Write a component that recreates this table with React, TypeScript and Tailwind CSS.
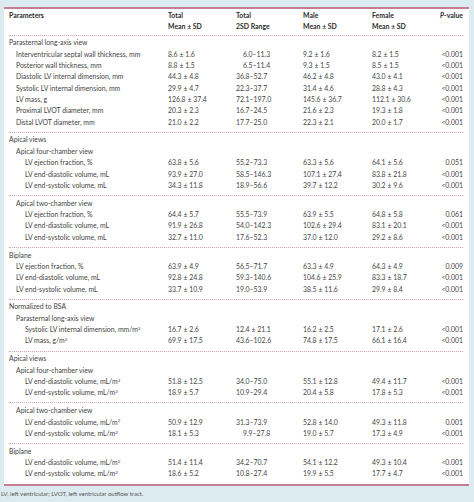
import React from 'react';

type Row = {
  label: React.ReactNode;
  level: number;
  vals?: string[];
  shift?: boolean;
};

const sup = (base: string) => (
  <>
    {base}
    <sup className="text-[4.5px]">2</sup>
  </>
);

const sections: Row[][] = [
  [
    { label: 'Parasternal long-axis view', level: 0 },
    { label: 'Interventricular septal wall thickness, mm', level: 1, vals: ['8.6 ± 1.6', '6.0–11.3', '9.2 ± 1.6', '8.2 ± 1.5', '<0.001'], shift: true },
    { label: 'Posterior wall thickness, mm', level: 1, vals: ['8.8 ± 1.5', '6.5–11.4', '9.3 ± 1.5', '8.5 ± 1.5', '<0.001'], shift: true },
    { label: 'Diastolic LV internal dimension, mm', level: 1, vals: ['44.3 ± 4.8', '36.8–52.7', '46.2 ± 4.8', '43.0 ± 4.1', '<0.001'] },
    { label: 'Systolic LV internal dimension, mm', level: 1, vals: ['29.9 ± 4.7', '22.3–37.7', '31.4 ± 4.6', '28.8 ± 4.3', '<0.001'] },
    { label: 'LV mass, g', level: 1, vals: ['126.8 ± 37.4', '72.1–197.0', '145.6 ± 36.7', '112.1 ± 30.6', '<0.001'] },
    { label: 'Proximal LVOT diameter, mm', level: 1, vals: ['20.3 ± 2.3', '16.7–24.5', '21.6 ± 2.3', '19.3 ± 1.8', '<0.001'] },
    { label: 'Distal LVOT diameter, mm', level: 1, vals: ['21.0 ± 2.2', '17.7–25.0', '22.3 ± 2.1', '20.0 ± 1.7', '<0.001'] },
  ],
  [
    { label: 'Apical views', level: 0 },
    { label: 'Apical four-chamber view', level: 1 },
    { label: 'LV ejection fraction, %', level: 2, vals: ['63.8 ± 5.6', '55.2–73.3', '63.3 ± 5.6', '64.1 ± 5.6', '0.051'] },
    { label: 'LV end-diastolic volume, mL', level: 2, vals: ['93.9 ± 27.0', '58.5–146.3', '107.1 ± 27.4', '83.8 ± 21.8', '<0.001'] },
    { label: 'LV end-systolic volume, mL', level: 2, vals: ['34.3 ± 11.8', '18.9–56.6', '39.7 ± 12.2', '30.2 ± 9.6', '<0.001'] },
  ],
  [
    { label: 'Apical two-chamber view', level: 1 },
    { label: 'LV ejection fraction, %', level: 2, vals: ['64.4 ± 5.7', '55.5–73.9', '63.9 ± 5.5', '64.8 ± 5.8', '0.061'] },
    { label: 'LV end-diastolic volume, mL', level: 2, vals: ['91.9 ± 26.8', '54.0–142.3', '102.6 ± 29.4', '83.1 ± 20.1', '<0.001'] },
    { label: 'LV end-systolic volume, mL', level: 2, vals: ['32.7 ± 11.0', '17.6–52.3', '37.0 ± 12.0', '29.2 ± 8.6', '<0.001'] },
  ],
  [
    { label: 'Biplane', level: 0 },
    { label: 'LV ejection fraction, %', level: 1, vals: ['63.9 ± 4.9', '56.5–71.7', '63.3 ± 4.9', '64.3 ± 4.9', '0.009'] },
    { label: 'LV end-diastolic volume, mL', level: 1, vals: ['92.8 ± 24.8', '59.3–140.6', '104.6 ± 25.9', '83.3 ± 18.7', '<0.001'] },
    { label: 'LV end-systolic volume, mL', level: 1, vals: ['33.7 ± 10.9', '19.0–53.9', '38.5 ± 11.6', '29.9 ± 8.4', '<0.001'] },
  ],
  [
    { label: 'Normalized to BSA', level: 0 },
    { label: 'Parasternal long-axis view', level: 1 },
    { label: sup('Systolic LV internal dimension, mm/m'), level: 2, vals: ['16.7 ± 2.6', '12.4 ± 21.1', '16.2 ± 2.5', '17.1 ± 2.6', '<0.001'] },
    { label: sup('LV mass, g/m'), level: 2, vals: ['69.9 ± 17.5', '43.6–102.6', '74.8 ± 17.5', '66.1 ± 16.4', '<0.001'] },
  ],
  [
    { label: 'Apical views', level: 0 },
    { label: 'Apical four-chamber view', level: 1 },
    { label: sup('LV end-diastolic volume, mL/m'), level: 2, vals: ['51.8 ± 12.5', '34.0–75.0', '55.1 ± 12.8', '49.4 ± 11.7', '<0.001'] },
    { label: sup('LV end-systolic volume, mL/m'), level: 2, vals: ['18.9 ± 5.7', '10.9–29.4', '20.4 ± 5.8', '17.8 ± 5.3', '<0.001'] },
  ],
  [
    { label: 'Apical two-chamber view', level: 1 },
    { label: sup('LV end-diastolic volume, mL/m'), level: 2, vals: ['50.9 ± 12.9', '31.3–73.9', '52.8 ± 14.0', '49.3 ± 11.8', '0.001'] },
    { label: sup('LV end-systolic volume, mL/m'), level: 2, vals: ['18.1 ± 5.3', '9.9–27.8', '19.0 ± 5.7', '17.3 ± 4.9', '<0.001'], shift: true },
  ],
  [
    { label: 'Biplane', level: 0 },
    { label: sup('LV end-diastolic volume, mL/m'), level: 2, vals: ['51.4 ± 11.4', '34.2–70.7', '54.1 ± 12.2', '49.3 ± 10.4', '<0.001'] },
    { label: sup('LV end-systolic volume, mL/m'), level: 2, vals: ['18.6 ± 5.2', '10.8–27.4', '19.9 ± 5.5', '17.7 ± 4.7', '<0.001'] },
  ],
];

const indent = ['pl-0', 'pl-[7px]', 'pl-[16px]'];

const TableRow = ({ row }: { row: Row }) => (
  <div className="grid grid-cols-[159px_68px_67px_69px_1fr_auto] h-[11.35px] items-center whitespace-nowrap">
    <div className={indent[row.level]}>{row.label}</div>
    {row.vals && (
      <>
        <div>{row.vals[0]}</div>
        <div className={row.shift ? 'pl-[7px]' : ''}>{row.vals[1]}</div>
        <div>{row.vals[2]}</div>
        <div>{row.vals[3]}</div>
        <div className="text-right">{row.vals[4]}</div>
      </>
    )}
  </div>
);

export default function App() {
  return (
    <div className="w-[474px] h-[502px] bg-[#dcebef] pt-[7px] font-['Lato',sans-serif] text-[6.9px] leading-none text-[#444] overflow-hidden">
      {/* TABLE PANEL */}
      <div className="ml-[4px] w-[465px] bg-white border-t-2 border-b-2 border-[#c97d94] pl-[5px] pr-[6px]">
        {/* HEADER */}
        <div className="pt-[1px] pb-[2.5px] border-b border-dotted border-[#d9a3b4] font-bold text-[#2b2b2b]">
          <div className="grid grid-cols-[159px_68px_67px_69px_1fr_auto] h-[11px] items-center">
            <div>Parameters</div>
            <div>Total</div>
            <div>Total</div>
            <div>Male</div>
            <div>Female</div>
            <div className="text-right"><span className="italic">P</span>-value</div>
          </div>
          <div className="grid grid-cols-[159px_68px_67px_69px_1fr_auto] h-[11px] items-center">
            <div></div>
            <div>Mean ± SD</div>
            <div>2SD Range</div>
            <div>Mean ± SD</div>
            <div>Mean ± SD</div>
            <div></div>
          </div>
        </div>

        {/* BODY */}
        {sections.map((rows, i) => (
          <div
            key={i}
            className={`pt-[1.5px] pb-[4px] ${i < sections.length - 1 ? 'border-b border-dotted border-[#d9a3b4]' : ''}`}
          >
            {rows.map((r, j) => (
              <TableRow row={r} key={j} />
            ))}
          </div>
        ))}
      </div>

      {/* FOOTNOTE */}
      <p className="mt-[5px] pl-[1px] text-[6px] text-[#555]">
        LV, left ventricular; LVOT, left ventricular outflow tract.
      </p>
    </div>
  );
}
